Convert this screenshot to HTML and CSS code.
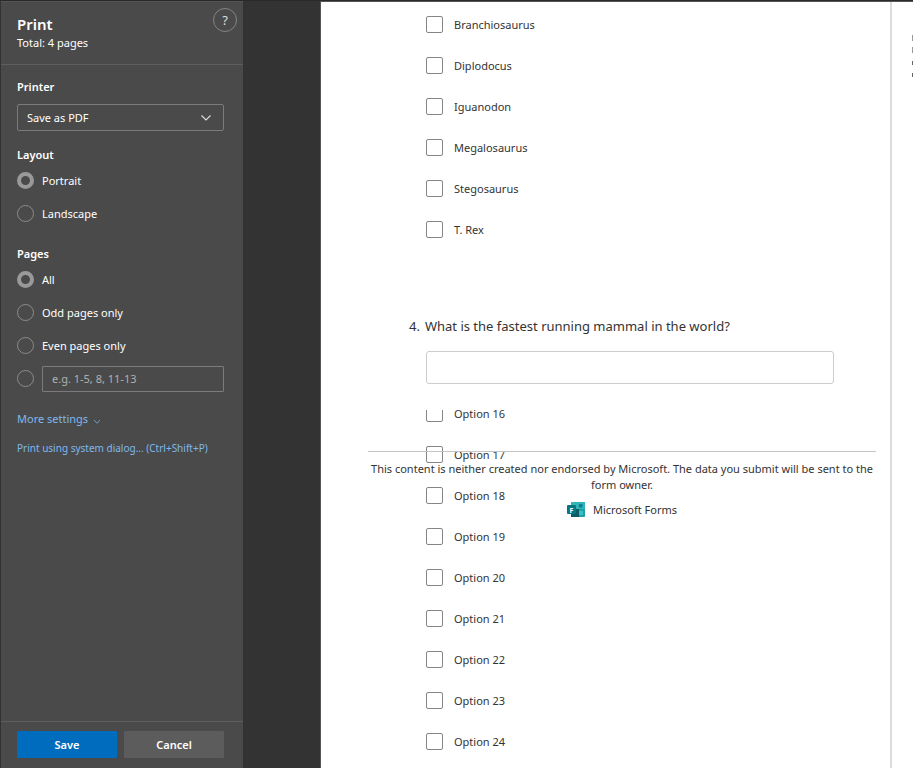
FILE: index.html
```
<!DOCTYPE html>
<html lang="en">
<head>
    <meta charset="UTF-8">
    <meta name="viewport" content="width=device-width, initial-scale=1.0">
    <title>Print</title>
    <link rel="stylesheet" href="styles.css">
</head>
<body>

<div class="dialog">

    <!-- print settings -->
    <form class="sidebar">
        <header class="header">
            <div>
                <h1>Print</h1>
                <p>Total: 4 pages</p>
            </div>
            <button class="help" type="button" aria-label="Help">?</button>
        </header>

        <div class="settings">
            <label class="title" for="printer">Printer</label>
            <div class="select">
                <select id="printer">
                    <option>Save as PDF</option>
                </select>
                <svg width="12" height="8" viewBox="0 0 12 8"><path d="M1.5 1.5 L6 6 L10.5 1.5" fill="none" stroke="#e0e0e0" stroke-width="1.1"/></svg>
            </div>

            <fieldset>
                <legend class="title">Layout</legend>
                <label class="radio"><input type="radio" name="layout" checked> Portrait</label>
                <label class="radio"><input type="radio" name="layout"> Landscape</label>
            </fieldset>

            <fieldset>
                <legend class="title">Pages</legend>
                <label class="radio"><input type="radio" name="pages" checked> All</label>
                <label class="radio"><input type="radio" name="pages"> Odd pages only</label>
                <label class="radio"><input type="radio" name="pages"> Even pages only</label>
                <div class="radio">
                    <input type="radio" name="pages" aria-label="Custom pages">
                    <input class="range" type="text" placeholder="e.g. 1-5, 8, 11-13" aria-label="Page range">
                </div>
            </fieldset>

            <a class="more" href="#">More settings
                <svg width="8" height="6" viewBox="0 0 8 6"><path d="M1 1 L4 4.3 L7 1" fill="none" stroke="#6f9cc4" stroke-width="1"/></svg>
            </a>
            <a class="system" href="#">Print using system dialog... (Ctrl+Shift+P)</a>
        </div>

        <footer class="buttons">
            <button class="save" type="button">Save</button>
            <button type="button">Cancel</button>
        </footer>
    </form>

    <!-- page preview -->
    <main class="preview">
        <div class="sheet">
            <div class="options">
                <label><input type="checkbox"> Branchiosaurus</label>
                <label><input type="checkbox"> Diplodocus</label>
                <label><input type="checkbox"> Iguanodon</label>
                <label><input type="checkbox"> Megalosaurus</label>
                <label><input type="checkbox"> Stegosaurus</label>
                <label><input type="checkbox"> T. Rex</label>
            </div>

            <label class="question" for="answer"><span>4.</span> What is the fastest running mammal in the world?</label>
            <input class="answer" id="answer" type="text">

            <!-- list continues across the page break, first row is cut -->
            <div class="continued">
                <div class="options cut">
                    <label><input type="checkbox"> Option 16</label>
                    <label><input type="checkbox"> Option 17</label>
                    <label><input type="checkbox"> Option 18</label>
                    <label><input type="checkbox"> Option 19</label>
                    <label><input type="checkbox"> Option 20</label>
                    <label><input type="checkbox"> Option 21</label>
                    <label><input type="checkbox"> Option 22</label>
                    <label><input type="checkbox"> Option 23</label>
                    <label><input type="checkbox"> Option 24</label>
                </div>
                <div class="notice">
                    <p>This content is neither created nor endorsed by Microsoft. The data you submit will be sent to the form owner.</p>
                    <div class="brand">
                        <svg width="18" height="16" viewBox="0 0 18 16">
                            <rect x="4" y="0" width="14" height="15" rx="1" fill="#1f9ea3"/>
                            <path d="M4 1 Q4 0 5 0 H17 Q18 0 18 1 V7 H4 Z" fill="#2fb4ba"/>
                            <rect x="4" y="7" width="8" height="8" fill="#0a5c66"/>
                            <circle cx="13.7" cy="3.7" r="2" fill="#107f89"/>
                            <rect x="12" y="9" width="4" height="4" fill="#37c0c6"/>
                            <rect x="0" y="3" width="9" height="9" rx="1" fill="#057580"/>
                            <text x="2.5" y="10.5" class="logo">F</text>
                        </svg>
                        <span>Microsoft Forms</span>
                    </div>
                </div>
            </div>
        </div>
        <div class="edge"><i></i><i></i><i class="dot"></i><i class="dot"></i></div>
    </main>

</div>

</body>
</html>
```
FILE: styles.css
```
*{
    box-sizing: border-box;
}

body{
    margin: 0;
    font-family: "Noto Sans", "Open Sans", sans-serif;
    font-size: 11px;
    line-height: 16px;
    color: #333;
    background: #333;
}

h1, p, fieldset, legend, input, button{
    margin: 0;
    padding: 0;
}

input, select, button{
    font: inherit;
    color: inherit;
}

fieldset{
    border: 0;
}

.dialog{
    display: flex;
    height: 100vh;
    overflow: hidden;
    border-top: 1px solid #2a2929;
    border-left: 1px solid #333;
}

/* sidebar */
.sidebar{
    display: flex;
    flex-direction: column;
    flex: none;
    width: 242px;
    border-top: 1px solid #555;
    background: #4a4a4a;
    color: #fff;
}

.header{
    display: flex;
    justify-content: space-between;
    padding: 12px 6px 13px 16px;
    border-bottom: 1px solid #5e5e5e;
}

.header h1{
    font-size: 15px;
    line-height: 21px;
    font-weight: 600;
}

.help{
    width: 24px;
    height: 24px;
    margin-top: -6px;
    border: 1px solid #858585;
    border-radius: 50%;
    background: none;
    color: #ddd;
    font-size: 13px;
}

.settings{
    display: flex;
    flex-direction: column;
    align-items: flex-start;
    flex: 1;
    padding: 14px 19px 0 16px;
}

.title{
    display: block;
    font-weight: 600;
}

.select{
    display: grid;
    align-items: center;
    width: 100%;
    margin: 9px 0 16px;
}

.select select, .select svg{
    grid-area: 1 / 1;
}

.select select{
    appearance: none;
    width: 100%;
    height: 27px;
    padding: 0 9px;
    border: 1px solid #7b7b7b;
    border-radius: 2px;
    background: #4a4a4a;
}

.select svg{
    justify-self: end;
    margin-right: 12px;
    pointer-events: none;
}

.settings fieldset{
    width: 100%;
    margin-bottom: 16px;
}

.settings legend{
    margin-bottom: 1px;
}

.radio{
    display: flex;
    align-items: center;
    gap: 8px;
    height: 33px;
}

.radio input[type=radio]{
    appearance: none;
    flex: none;
    width: 17px;
    height: 17px;
    border: 1px solid #8c8c8c;
    border-radius: 50%;
}

.radio input[type=radio]:checked{
    border: 4px solid #999;
}

.range{
    flex: 1;
    min-width: 0;
    height: 26px;
    padding: 0 9px;
    border: 1px solid #7b7b7b;
    border-radius: 1px;
    background: none;
}

.range::placeholder{
    color: #b0b0b0;
    opacity: 1;
}

.settings a{
    color: #7fb8ee;
    text-decoration: none;
}

.more svg{
    margin-left: 2px;
    vertical-align: -2px;
}

.settings .system{
    margin-top: 13px;
    font-size: 10px;
}

.buttons{
    display: flex;
    gap: 7px;
    padding: 9px 19px 10px 16px;
    border-top: 1px solid #5e5e5e;
}

.buttons button{
    flex: 1;
    height: 27px;
    border: 0;
    border-radius: 1px;
    background: #5c5c5c;
    font-weight: 600;
}

.buttons .save{
    background: #006cbe;
}

/* preview */
.preview{
    display: flex;
    flex: 1;
    margin-left: 77px;
    border-top: 1px solid #555;
    border-left: 1px solid #555;
    background: #fff;
}

.sheet{
    flex: 1;
    padding: 2px 14px 0 47px;
    border-right: 2px solid #dcdcdc;
}

.options{
    padding-left: 58px;
}

.options label{
    display: flex;
    align-items: center;
    gap: 11px;
    height: 41px;
}

.options input{
    appearance: none;
    width: 17px;
    height: 17px;
    border: 1px solid #858585;
    border-radius: 2px;
    background: #fff;
}

.question{
    display: flex;
    gap: 5px;
    padding: 66px 0 15px 41px;
    font-size: 13px;
    line-height: 20px;
}

.answer{
    display: block;
    width: calc(100% - 100px);
    height: 33px;
    margin-left: 58px;
    padding: 0 8px;
    border: 1px solid #ccc;
    border-radius: 3px;
}

.continued{
    position: relative;
    margin-top: 26px;
    overflow: hidden;
}

.cut{
    margin-top: -17px;
}

.notice{
    position: absolute;
    top: 41px;
    left: 0;
    right: 0;
    padding-top: 9px;
    border-top: 1px solid #c4c4c4;
    text-align: center;
    pointer-events: none;
}

.brand{
    display: flex;
    align-items: center;
    justify-content: center;
    gap: 8px;
    margin-top: 9px;
}

.logo{
    font-size: 7px;
    font-weight: 700;
    fill: #fff;
}

/* slice of the next page */
.edge{
    display: flex;
    flex-direction: column;
    align-items: flex-end;
    gap: 6px;
    width: 21px;
    padding-top: 33px;
}

.edge i{
    width: 1px;
    height: 6px;
    background: #999;
}

.edge .dot{
    height: 4px;
    margin-top: 2px;
    background: #666;
}
```
